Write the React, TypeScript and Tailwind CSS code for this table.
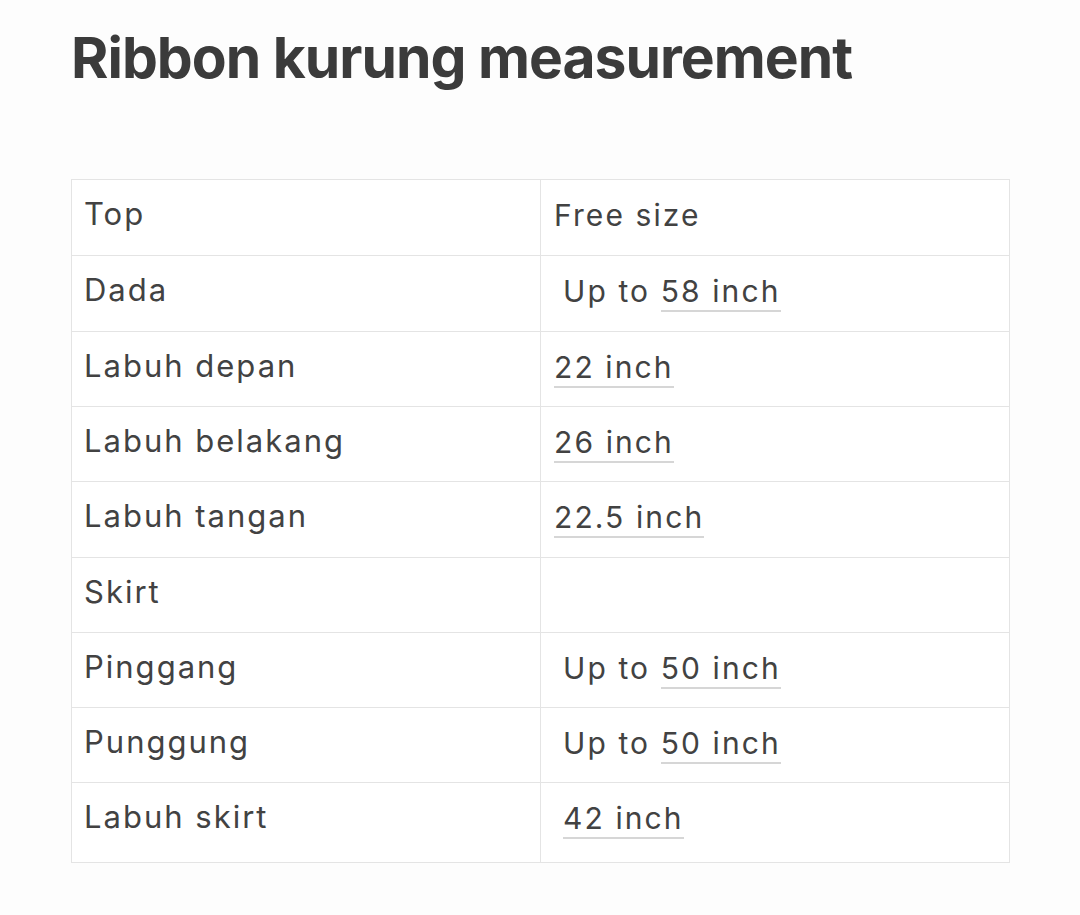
import React from "react";

type Row = { label: string; prefix?: string; value?: string; lead?: boolean; h: string };

const rows: Row[] = [
  { label: "Top", prefix: "Free size", h: "h-[75px]" },
  { label: "Dada", prefix: "Up to ", value: "58 inch", lead: true, h: "h-[76px]" },
  { label: "Labuh depan", value: "22 inch", h: "h-[75px]" },
  { label: "Labuh belakang", value: "26 inch", h: "h-[75px]" },
  { label: "Labuh tangan", value: "22.5 inch", h: "h-[76px]" },
  { label: "Skirt", h: "h-[75px]" },
  { label: "Pinggang", prefix: "Up to ", value: "50 inch", lead: true, h: "h-[75px]" },
  { label: "Punggung", prefix: "Up to ", value: "50 inch", lead: true, h: "h-[75px]" },
  { label: "Labuh skirt", value: "42 inch", lead: true, h: "h-[80px]" },
];

export default function App() {
  return (
    <div
      className="w-[1080px] h-[915px] bg-[#fdfdfd] text-[#424242] overflow-hidden"
      style={{ fontFamily: "Inter, 'Liberation Sans', sans-serif" }}
    >
      <h1 className="pl-[71px] pt-[23px] text-[57px] leading-[70px] font-bold text-[#3b3b3b] tracking-[-1px]">
        Ribbon kurung measurement
      </h1>
      <div className="ml-[71px] mt-[86px] w-[939px] border border-[#e4e4e4] bg-white">
        {rows.map((r, i) => (
          <div
            key={i}
            className={`grid grid-cols-[469px_1fr] ${i > 0 ? "border-t border-[#e4e4e4]" : ""} ${r.h}`}
          >
            <div className="border-r border-[#e4e4e4] pl-[12px] pt-[14px] text-[31px] leading-[40px] tracking-[2px]">
              {r.label}
            </div>
            <div className={`${r.lead ? "pl-[22px]" : "pl-[13px]"} pt-[15px] text-[30px] leading-[40px] tracking-[2.1px]`}>
              {r.prefix}
              {r.value && (
                <span className="border-b-2 border-[#d6d6d6] pb-[1px]">{r.value}</span>
              )}
            </div>
          </div>
        ))}
      </div>
    </div>
  );
}
